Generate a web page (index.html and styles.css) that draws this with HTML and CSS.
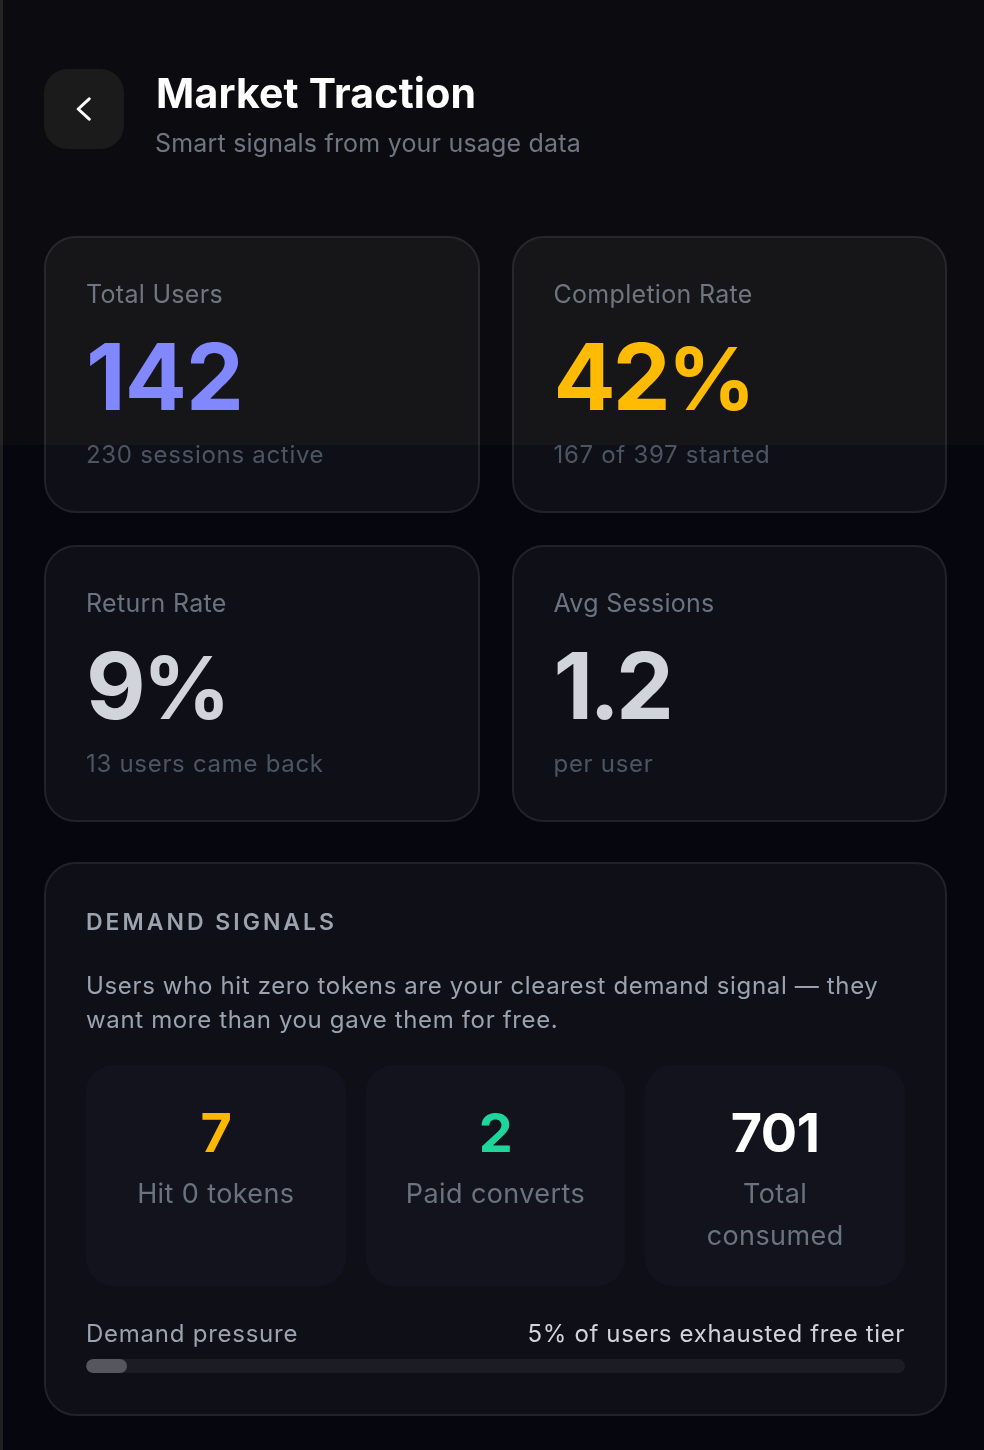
FILE: index.html
```html
<!DOCTYPE html>
<html lang="en">
<head>
<meta charset="utf-8">
<title>Market Traction</title>
<link rel="stylesheet" href="styles.css">
</head>
<body>
<div class="tint"></div>
<main class="page">
  <header class="header">
    <button class="back" aria-label="Back">
      <svg width="24" height="24" viewBox="0 0 24 24" fill="none"><polyline points="17.2,1.8 6.2,12 17.2,22.2" stroke="#ffffff" stroke-width="3" stroke-linecap="round" stroke-linejoin="round"/></svg>
    </button>
    <div class="titles">
      <h1 class="title">Market Traction</h1>
      <p class="subtitle">Smart signals from your usage data</p>
    </div>
  </header>

  <section class="metrics">
    <div class="card">
      <div class="card-label">Total Users</div>
      <div class="card-value indigo">142</div>
      <div class="card-sub">230 sessions active</div>
    </div>
    <div class="card">
      <div class="card-label">Completion Rate</div>
      <div class="card-value tight amber">42<span class="pct">%</span></div>
      <div class="card-sub">167 of 397 started</div>
    </div>
    <div class="card">
      <div class="card-label">Return Rate</div>
      <div class="card-value tight light">9<span class="pct">%</span></div>
      <div class="card-sub">13 users came back</div>
    </div>
    <div class="card">
      <div class="card-label">Avg Sessions</div>
      <div class="card-value tighter light">1.2</div>
      <div class="card-sub">per user</div>
    </div>
  </section>

  <section class="demand">
    <h2 class="demand-title">DEMAND SIGNALS</h2>
    <p class="demand-desc">Users who hit zero tokens are your clearest demand signal — they want more than you gave them for free.</p>
    <div class="stats">
      <div class="stat">
        <div class="stat-value amber">7</div>
        <div class="stat-label">Hit 0 tokens</div>
      </div>
      <div class="stat">
        <div class="stat-value green">2</div>
        <div class="stat-label">Paid converts</div>
      </div>
      <div class="stat">
        <div class="stat-value white">701</div>
        <div class="stat-label">Total consumed</div>
      </div>
    </div>
    <div class="pressure">
      <span class="pressure-label">Demand pressure</span>
      <span class="pressure-value">5% of users exhausted free tier</span>
    </div>
    <div class="bar"><div class="bar-fill" style="width: 5%"></div></div>
  </section>
</main>
</body>
</html>
```

FILE: styles.css
```css
* { box-sizing: border-box; }

html, body {
  margin: 0;
  padding: 0;
  background: #05060e;
}

body {
  position: relative;
  font-family: Inter, "Noto Sans", "Liberation Sans", sans-serif;
  color: #ffffff;
}

.tint {
  position: absolute;
  left: 0;
  top: 0;
  width: 100%;
  height: 445px;
  background: rgb(7, 6, 2);
  mix-blend-mode: screen;
  pointer-events: none;
  z-index: 10;
}

.page {
  border-left: 3px solid #202023;
  min-height: 1450px;
  padding: 69px 37px 36px 41px;
  background: #05060e;
}

/* Header */
.header {
  display: flex;
  align-items: flex-start;
  gap: 32px;
}

.back {
  width: 80px;
  height: 80px;
  flex: none;
  border: none;
  border-radius: 24px;
  background: #16161a;
  display: flex;
  align-items: center;
  justify-content: center;
  padding: 0;
}

.back svg { display: block; }

.titles {
  display: flex;
  flex-direction: column;
}

.title {
  margin: 0;
  font-size: 41px;
  line-height: 48px;
  font-weight: 700;
  letter-spacing: 0.2px;
  color: #ffffff;
}

.subtitle {
  margin: 8px 0 0 -1px;
  font-size: 25px;
  line-height: 36px;
  font-weight: 400;
  color: #6b7280;
  letter-spacing: 0.2px;
}

/* Metric cards */
.metrics {
  margin-top: 75px;
  display: grid;
  grid-template-columns: 1fr 1fr;
  gap: 32px;
}

.card {
  background: #0f1017;
  border: 2px solid #22232a;
  border-radius: 32px;
  padding: 40px;
  display: flex;
  flex-direction: column;
}

.card-label {
  font-size: 25px;
  line-height: 32px;
  color: #6b7280;
  letter-spacing: 0.3px;
}

.card-value {
  margin-top: 21px;
  height: 92px;
  font-size: 92px;
  line-height: 92px;
  font-weight: 700;
  letter-spacing: -1px;
  white-space: nowrap;
}

.card-value.tight { letter-spacing: -3px; }
.card-value.tighter { letter-spacing: -4px; }

.card-value .pct {
  font-size: 0.94em;
  line-height: 0;
}

.card-sub {
  margin-top: 16px;
  font-size: 24px;
  line-height: 32px;
  color: #4b5563;
  letter-spacing: 0.7px;
}

.indigo { color: #7c84ff; }
.amber { color: #ffb800; }
.light { color: #d1d5db; }
.green { color: #1ed69a; }
.white { color: #ffffff; }

/* Demand signals */
.demand {
  margin-top: 40px;
  background: #0f1017;
  border: 2px solid #22232a;
  border-radius: 32px;
  padding: 42px 40px 41px 40px;
  display: flex;
  flex-direction: column;
}

.demand-title {
  margin: 0;
  font-size: 23px;
  line-height: 32px;
  font-weight: 600;
  letter-spacing: 3px;
  color: #9ca3af;
}

.demand-desc {
  margin: 31px 0 0 0;
  font-size: 24px;
  line-height: 34px;
  color: #9ca3af;
  letter-spacing: 0.65px;
}

.stats {
  margin-top: 28px;
  display: grid;
  grid-template-columns: repeat(3, 1fr);
  gap: 20px;
}

.stat {
  background: #12131c;
  border-radius: 28px;
  padding: 35px 28px 29px 28px;
  display: flex;
  flex-direction: column;
  align-items: center;
  text-align: center;
}

.stat-value {
  font-size: 54px;
  line-height: 65px;
  font-weight: 700;
  letter-spacing: -0.5px;
}

.stat-label {
  margin-top: 8px;
  font-size: 27px;
  line-height: 42px;
  color: #6b7280;
  letter-spacing: 0.4px;
}

.pressure {
  margin-top: 32px;
  display: flex;
  justify-content: space-between;
  align-items: baseline;
  font-size: 24px;
  line-height: 32px;
  letter-spacing: 0.75px;
}

.pressure-label { color: #9ca3af; }
.pressure-value { color: #d1d5db; letter-spacing: 0.65px; }

.bar {
  margin-top: 9px;
  height: 14px;
  border-radius: 7px;
  background: #1c1d24;
  overflow: hidden;
}

.bar-fill {
  height: 100%;
  border-radius: 7px;
  background: #55565e;
}
```
